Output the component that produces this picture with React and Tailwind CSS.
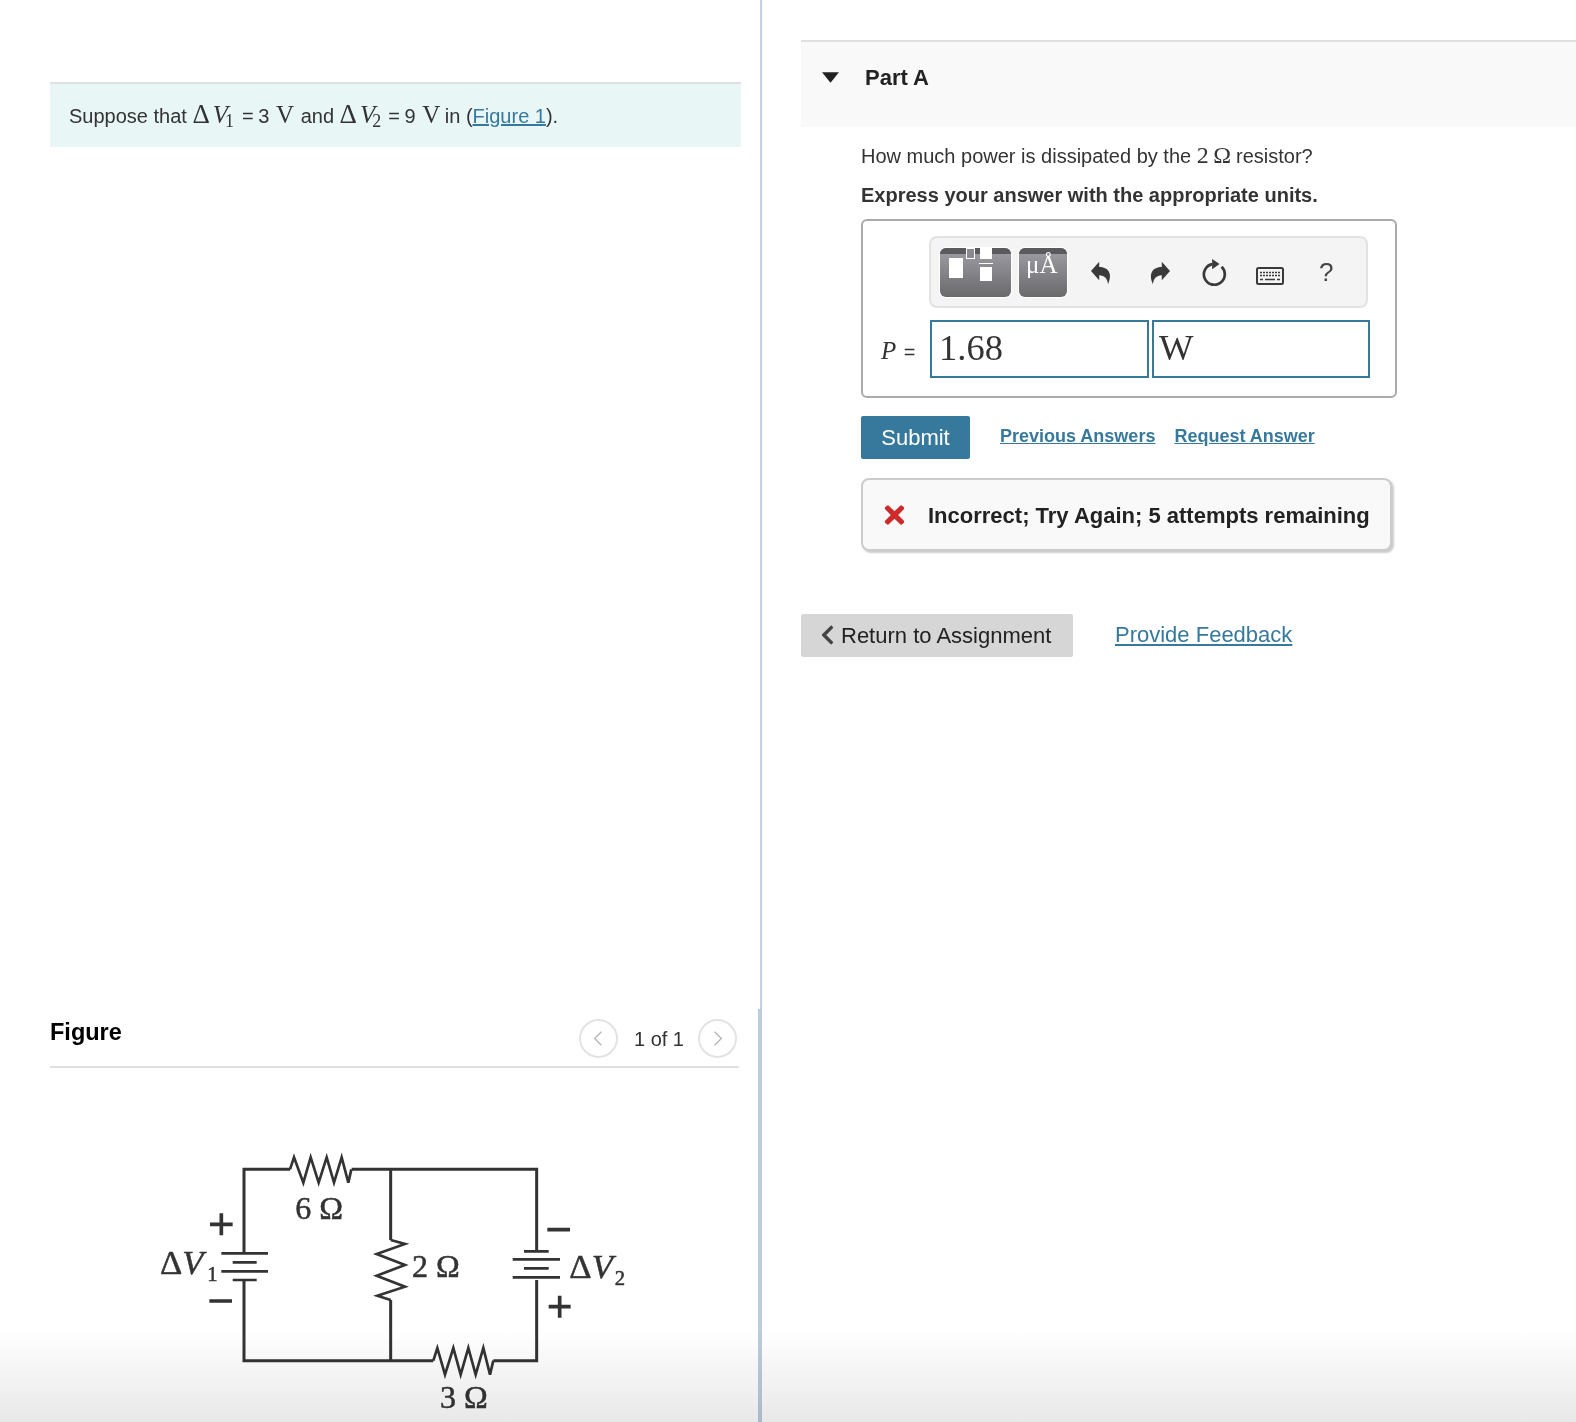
import { FaChevronLeft, FaTimes } from "react-icons/fa";

const sans = "font-['Liberation_Sans',Arial,sans-serif]";
const serif = "font-['Liberation_Serif','Times_New_Roman',serif]";

function DeltaV({ n }) {
  return (
    <span className={`${serif} text-[25px] leading-none`}>
      <span className="mr-[3px] text-[27px]">Δ</span>
      <i>V</i>
      <span className="relative top-[4px] -ml-[3px] text-[18px] leading-none">{n}</span>
    </span>
  );
}

function Volt({ className }) {
  return <span className={`${serif} ml-[1px] text-[25px] leading-none ${className}`}>V</span>;
}

function ToolButton({ className, children }) {
  return (
    <div
      className={`relative h-[49px] overflow-hidden rounded-[6px] bg-gradient-to-b from-[#a09fa6] to-[#6a6a6d] ring-1 ring-white ${className}`}
    >
      <div className="h-[6px] bg-[#5b5b5f]" />
      {children}
    </div>
  );
}

function Resistor({ d }) {
  return <path d={d} fill="none" stroke="#333" strokeWidth="8" strokeLinejoin="miter" />;
}

function UndoIcon({ className }) {
  return (
    <svg viewBox="30 45 70 75" className={`h-[25px] w-[23px] ${className}`}>
      <path d="M33 78L58 50V66C85 66 100 85 85 118C82 100 75 92 58 91V106Z" fill="#3a3a3a" />
    </svg>
  );
}

function Circuit() {
  const label = {
    fontFamily: "'Liberation Serif', serif",
    fill: "#333",
    stroke: "#333",
    strokeWidth: 1.5,
  };
  return (
    <svg viewBox="0 0 1500 876" className="h-[292px] w-[500px] blur-[0.4px]">
      <g fill="none" stroke="#333" strokeWidth="9">
        <path d="M450 118H312V366M312 450V692H880M1060 692H1190V450M1190 366V118H635M752 118V330M752 510V692" />
        <path d="M244 370H384M278 397H350M244 424H384M278 450H350" strokeWidth="8" />
        <path d="M1152 364H1226M1118 388H1260M1152 415H1226M1118 442H1260" strokeWidth="8" />
      </g>
      <Resistor d="M450 118L462 82L490 158L512 82L536 158L560 82L582 158L605 82L625 158L634 118" />
      <Resistor d="M880 692L892 654L915 734L940 654L962 734L985 654L1007 734L1030 654L1050 734L1060 692" />
      <Resistor d="M752 330L795 342L710 372L795 405L710 437L795 470L712 497L752 510" />
      <g stroke="#333" strokeWidth="11">
        <path d="M210 283H278M244 250V316M1222 299H1290M208 513H276M1226 530H1292M1259 497V563" />
      </g>
      <text x="466" y="266" fontSize="96" style={label}>6 Ω</text>
      <text x="816" y="441" fontSize="96" style={label}>2 Ω</text>
      <text x="900" y="833" fontSize="96" style={label}>3 Ω</text>
      <text x="60" y="432" fontSize="104" style={label}>Δ<tspan fontStyle="italic">V</tspan></text>
      <text x="202" y="454" fontSize="62" style={label}>1</text>
      <text x="1288" y="444" fontSize="104" style={label}>Δ<tspan fontStyle="italic">V</tspan></text>
      <text x="1424" y="466" fontSize="62" style={label}>2</text>
    </svg>
  );
}

export default function App() {
  return (
    <div className={`relative flex h-[1422px] overflow-hidden bg-white text-[#333] ${sans}`}>
      <div className="flex w-[758px] shrink-0 flex-col pl-[50px]">
        <div className="mt-[82px] flex h-[65px] w-[691px] items-center border-t-2 border-[#e0e0e0] bg-[#e8f6f6] pl-[19px] text-[20px]">
          <span>
            Suppose that <DeltaV n="1" />
            <span className="ml-[8px] -mr-[1px]">=</span> 3 <Volt className="mr-[1px]" /> and <DeltaV n="2" />
            <span className="ml-[7px] -mr-[1px]">=</span> 9 <Volt className="-mr-[1px]" /> in (
            <a href="#" className="text-[#37799c] underline">Figure 1</a>).
          </span>
        </div>

        <div className="mt-[865px] flex h-[56px] w-[689px] items-center justify-between border-b-2 border-[#e0e0e0] pb-[2px] pr-[2px]">
          <h2 className="-mt-[10px] text-[23.5px] font-bold text-black">Figure</h2>
          <div className="flex items-center gap-[15px] text-[20px]">
            <button type="button" className="flex size-[39px] items-center justify-center rounded-full border-2 border-[#e3e3e3]">
              <svg viewBox="0 0 12 20" className="h-[17px] w-[10px]"><path d="M10 2L2 10l8 8" fill="none" stroke="#b5b5b5" strokeWidth="1.6" /></svg>
            </button>
            <span className="relative top-[1px] left-[1px]">1 of 1</span>
            <button type="button" className="flex size-[39px] items-center justify-center rounded-full border-2 border-[#e3e3e3]">
              <svg viewBox="0 0 12 20" className="h-[17px] w-[10px]"><path d="M2 2l8 8-8 8" fill="none" stroke="#b5b5b5" strokeWidth="1.6" /></svg>
            </button>
          </div>
        </div>

        <div className="ml-[90px] mt-[62px]">
          <Circuit />
        </div>
      </div>

      <div className="flex w-[4px] shrink-0 flex-col items-end">
        <div className="h-[1009px] w-[2px] bg-[#c3d0e2]" />
        <div className="w-full flex-1 bg-[#bccbdf]" />
      </div>

      <div className="ml-[39px] flex-1">
        <div className="mt-[40px] flex h-[87px] items-start border-t-2 border-[#e0e0e0] bg-[#f9f9f9] pl-[21px] pt-[24px]">
          <svg viewBox="0 0 18 11" className="mt-[6px] h-[11px] w-[17px]"><path d="M0 0h18L9 11z" fill="#222" /></svg>
          <h3 className="ml-[26px] text-[22px] font-bold leading-[24px] text-[#222]">Part A</h3>
        </div>

        <div className="pl-[60px]">
          <p className="mt-[15px] text-[20px] leading-[28px]">
            How much power is dissipated by the <span className={`${serif} text-[24px] leading-none tracking-[-0.7px]`}>2 Ω</span> resistor?
          </p>
          <p className="mt-[11px] text-[20px] font-bold leading-[28px]">Express your answer with the appropriate units.</p>

          <div className="mt-[10px] h-[179px] w-[536px] rounded-[6px] border-2 border-[#aaa] pl-[18px] pt-[15px]">
            <div className="ml-[48px] flex h-[72px] w-[439px] items-center rounded-[8px] border-2 border-[#e2e2e2] bg-[#f4f4f4] pl-[9px]">
              <ToolButton className="w-[71px]">
                <div className="absolute left-[9px] top-[10px] h-[20px] w-[14px] bg-white" />
                <div className="absolute left-[26px] top-0 h-[11px] w-[9px] border border-white bg-[#8a8a8e]" />
                <div className="absolute left-[40px] top-0 h-[11px] w-[12px] bg-white" />
                <div className="absolute left-[39px] top-[15px] h-[1px] w-[14px] bg-white" />
                <div className="absolute left-[40px] top-[19px] h-[14px] w-[12px] bg-white" />
              </ToolButton>
              <ToolButton className="ml-[8px] w-[48px]">
                <span className={`absolute left-[7px] top-[2px] text-[25px] leading-[30px] text-white ${serif}`}>μÅ</span>
              </ToolButton>
              <div className="ml-[23px] flex items-center text-[#333]">
                <UndoIcon />
                <UndoIcon className="ml-[35px] -scale-x-100" />
                <svg viewBox="362 42 80 83" className="ml-[29px] h-[28px] w-[27px]">
                  <path d="M398 60A31 31 0 1 0 426 68" fill="none" stroke="#3a3a3a" strokeWidth="8" />
                  <path d="M398 45L420 60L398 75Z" fill="#3a3a3a" />
                </svg>
                <svg viewBox="0 0 28 18" className="ml-[29px] mt-[8px] h-[18px] w-[28px]">
                  <rect x="1" y="1" width="26" height="16" rx="1.5" fill="none" stroke="#3a3a3a" strokeWidth="2" />
                  <path d="M4 5.5h20M4 8.5h20" stroke="#3a3a3a" strokeWidth="1.6" strokeDasharray="2 1" />
                  <path d="M4 12.5h3M9 12.5h10M21 12.5h3" stroke="#3a3a3a" strokeWidth="1.6" />
                </svg>
                <span className="ml-[35px] text-[26px] leading-none text-[#444]">?</span>
              </div>
            </div>

            <div className="mt-[12px] flex items-center">
              <span className="relative top-[2px] w-[49px] text-[20px]">
                <i className={`${serif} mr-[2px] text-[25px]`}>P</i> =
              </span>
              <div className={`flex h-[58px] w-[219px] items-center border-2 border-[#37799c] pb-[2px] pl-[7px] text-[36.5px] ${serif}`}>1.68</div>
              <div className={`ml-[3px] flex h-[58px] w-[218px] items-center border-2 border-[#37799c] pb-[2px] pl-[5px] text-[36.5px] ${serif}`}>W</div>
            </div>
          </div>

          <div className="mt-[18px] flex items-center">
            <button type="button" className="h-[43px] w-[109px] rounded-[2px] bg-[#37799c] pb-[1px] text-[22px] text-white">Submit</button>
            <a href="#" className="ml-[30px] -mt-[3px] text-[18px] font-bold text-[#37799c] underline">Previous Answers</a>
            <a href="#" className="ml-[19px] -mt-[3px] text-[18px] font-bold text-[#37799c] underline">Request Answer</a>
          </div>

          <div className="mt-[19px] flex h-[73px] w-[531px] items-center rounded-[8px] border-2 border-[#ccc] bg-[#f9f9f9] pl-[19px] shadow-[2px_2px_2px_#ccc]">
            <FaTimes className="h-[28px] w-[25px] text-[#cf2a2a]" />
            <span className="relative top-[1px] ml-[21px] text-[22px] font-bold text-[#222]">Incorrect; Try Again; 5 attempts remaining</span>
          </div>
        </div>

        <div className="mt-[63px] flex items-center">
          <a href="#" className="flex h-[43px] w-[272px] items-center rounded-[2px] bg-[#d6d6d6] pb-[1px] pl-[18px] text-[22px] text-[#222]">
            <FaChevronLeft className="mr-[5px] h-[22px] w-[17px] text-[#444]" />
            Return to Assignment
          </a>
          <a href="#" className="ml-[42px] -mt-[2px] text-[22px] text-[#37799c] underline">Provide Feedback</a>
        </div>
      </div>

      <div className="pointer-events-none absolute inset-x-0 bottom-0 h-[92px] bg-gradient-to-b from-white to-[#e8e8e8] mix-blend-multiply" />
    </div>
  );
}
